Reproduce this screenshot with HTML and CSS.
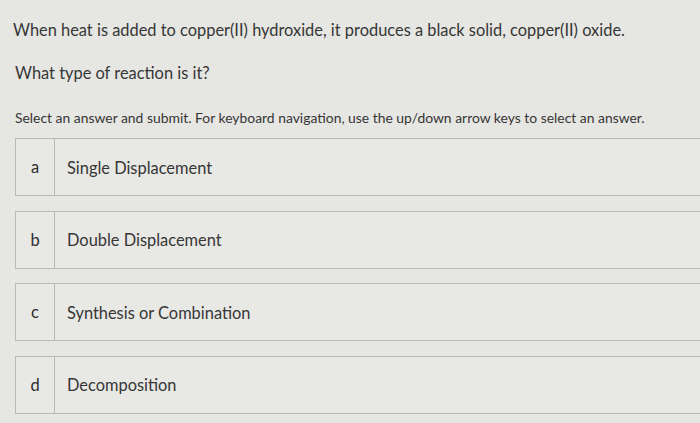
FILE: index.html
```html
<!DOCTYPE html>
<html>
<head>
<meta charset="utf-8">
<link rel="stylesheet" href="styles.css">
</head>
<body>
<div class="page">
  <p class="question">When heat is added to copper(II) hydroxide, it produces a black solid, copper(II) oxide.</p>
  <p class="question q2">What type of reaction is it?</p>
  <p class="hint">Select an answer and submit. For keyboard navigation, use the up/down arrow keys to select an answer.</p>
  <div class="options">
    <div class="option"><div class="letter">a</div><div class="label">Single Displacement</div></div>
    <div class="option"><div class="letter">b</div><div class="label">Double Displacement</div></div>
    <div class="option"><div class="letter">c</div><div class="label">Synthesis or Combination</div></div>
    <div class="option"><div class="letter">d</div><div class="label">Decomposition</div></div>
  </div>
</div>
</body>
</html>
```
FILE: styles.css
```css
html, body {
  margin: 0;
  padding: 0;
  background: #e6e6e3;
}
body {
  font-family: Lato, "Open Sans", sans-serif;
  color: #363636;
  width: 700px;
  height: 423px;
  overflow: hidden;
}
.page {
  padding: 19px 0 0 13px;
}
.question {
  margin: 0;
  font-size: 16.4px;
  line-height: 22px;
}
.q2 {
  margin-top: 21px;
  margin-left: 2px;
}
.hint {
  margin: 25px 0 0 2px;
  font-size: 13.9px;
  line-height: 18px;
}
.options {
  margin-top: 11px;
  margin-left: 2px;
  display: flex;
  flex-direction: column;
  gap: 14.6px;
  width: 720px;
}
.option {
  box-sizing: border-box;
  display: flex;
  height: 58px;
  border: 1px solid #b9b9b6;
  background: #e8e8e5;
}
.letter {
  width: 38px;
  border-right: 1px solid #b9b9b6;
  display: flex;
  align-items: center;
  justify-content: center;
  font-size: 16.5px;
  color: #2e2e2e;
}
.label {
  display: flex;
  align-items: center;
  padding-left: 12px;
  font-size: 16.4px;
}
```
